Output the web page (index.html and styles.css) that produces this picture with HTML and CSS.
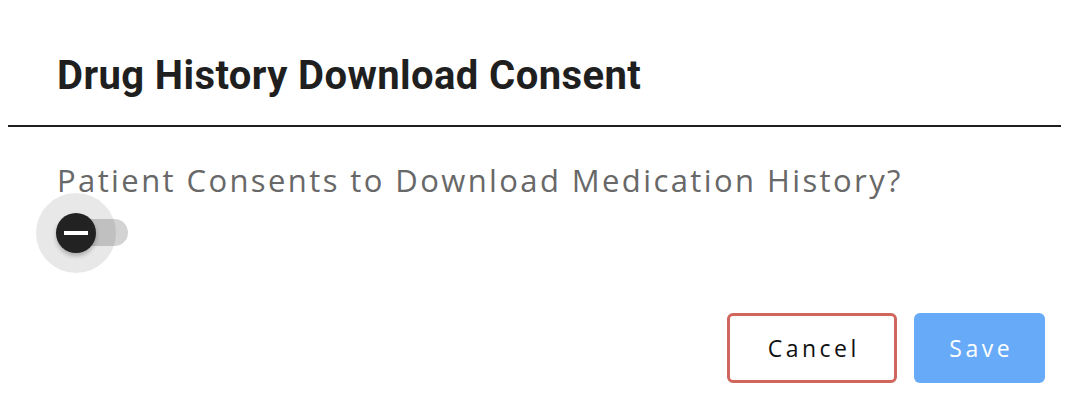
FILE: index.html
```html
<!DOCTYPE html>
<html lang="en">
<head>
<meta charset="utf-8">
<title>Drug History Download Consent</title>
<link rel="stylesheet" href="styles.css">
</head>
<body>
<div class="dialog">
  <div class="dialog-header">
    <h2 class="dialog-title">Drug History Download Consent</h2>
  </div>
  <div class="dialog-body">
    <p class="question">Patient Consents to Download Medication History?</p>
    <div class="switch" role="switch" aria-checked="mixed">
      <span class="switch-track"></span>
      <span class="switch-thumb"><span class="switch-minus"></span></span>
    </div>
  </div>
  <div class="dialog-footer">
    <button class="btn btn-cancel">Cancel</button>
    <button class="btn btn-save">Save</button>
  </div>
</div>
</body>
</html>
```

FILE: styles.css
```css
html, body {
  margin: 0;
  padding: 0;
  background: #ffffff;
}

.dialog {
  margin: 0 5px 0 8px;
  font-family: "Open Sans", "Lato", sans-serif;
}

.dialog-header {
  padding: 52px 0 25px 49px;
  border-bottom: 2px solid #1f1f1f;
}

.dialog-title {
  margin: 0;
  font-family: Roboto, "Liberation Sans", sans-serif;
  font-weight: 700;
  font-size: 40px;
  letter-spacing: 0.4px;
  line-height: 48px;
  color: #1f1f1f;
}

.dialog-body {
  padding: 35px 0 0 49px;
}

.question {
  margin: 0;
  font-size: 31px;
  line-height: 36px;
  color: #686868;
  letter-spacing: 2.4px;
}

.switch {
  position: relative;
  width: 72px;
  height: 40px;
  margin: 15px 0 0 -1px;
}

.switch-track {
  position: absolute;
  left: 6px;
  right: 0;
  top: 6px;
  height: 27px;
  border-radius: 14px;
  background: #d3d3d3;
}

.switch-thumb {
  position: absolute;
  left: 0;
  top: 0;
  width: 40px;
  height: 40px;
  border-radius: 50%;
  background: #222222;
  display: flex;
  align-items: center;
  justify-content: center;
  box-shadow: 0 0 0 20px rgba(0, 0, 0, 0.09), 0 3px 4px rgba(0, 0, 0, 0.25);
}

.switch-minus {
  width: 24px;
  height: 4px;
  background: #ffffff;
}

.dialog-footer {
  display: flex;
  justify-content: flex-end;
  gap: 17px;
  padding: 60px 16px 0 0;
}

.btn {
  height: 70px;
  border-radius: 6px;
  font-family: "Open Sans", "Lato", sans-serif;
  font-size: 23px;
  letter-spacing: 3.5px;
  text-indent: 3.5px;
  cursor: pointer;
}

.btn-cancel {
  width: 170px;
  background: #ffffff;
  border: 3px solid #d0665e;
  color: #111111;
}

.btn-save {
  width: 131px;
  background: #66aaf8;
  border: none;
  color: #ffffff;
}
```
